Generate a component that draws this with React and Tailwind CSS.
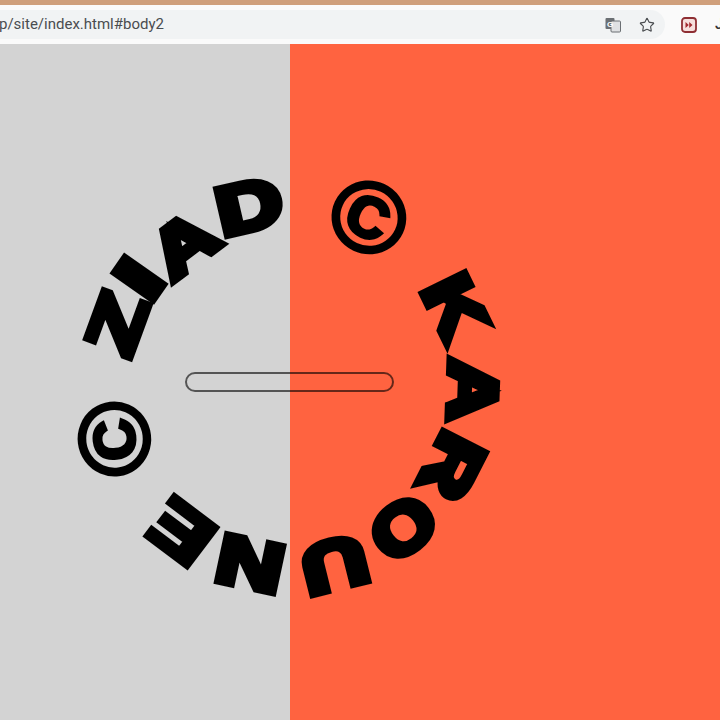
import { Star } from 'lucide-react'

const letters = [
  { ch: 'Z', x: 116, y: 323, rot: -70, sx: 1.4 },
  { ch: 'I', x: 138, y: 278, rot: -55, sx: 1.5 },
  { ch: 'A', x: 183, y: 243, rot: -37, sx: 1.3 },
  { ch: 'D', x: 249, y: 205, rot: -13, sx: 1.32 },
  { ch: '©', x: 369, y: 217, rot: 25, sx: 1.02, glyph: true },
  { ch: 'K', x: 456, y: 306, rot: 64, sx: 1.24 },
  { ch: 'A', x: 474, y: 390, rot: 92, sx: 1.26 },
  { ch: 'R', x: 453, y: 467, rot: 117, sx: 1.3 },
  { ch: 'O', x: 404, y: 529, rot: 142, sx: 1.18 },
  { ch: 'U', x: 335, y: 566, rot: 166, sx: 1.32 },
  { ch: 'N', x: 250, y: 565, rot: 192, sx: 1.34 },
  { ch: 'E', x: 181, y: 533, rot: 217, sx: 1.28 },
  { ch: '©', x: 114, y: 439, rot: -97, sx: 1.02, glyph: true },
]

function CircleText() {
  return (
    <svg width="720" height="720" viewBox="0 0 720 720" className="absolute left-0 top-0">
      {letters.map((l, i) => (
        <text
          key={i}
          transform={`translate(${l.x} ${l.y}) rotate(${l.rot}) scale(${l.sx} 1)`}
          y={l.glyph ? 35 : 25}
          textAnchor="middle"
          fontSize={l.glyph ? 100 : 69}
          className="fill-black stroke-black font-['Liberation_Sans',sans-serif] font-bold"
          strokeWidth={l.glyph ? 3 : 7}
          strokeLinejoin="miter"
        >
          {l.ch}
        </text>
      ))}
    </svg>
  )
}

function Toolbar() {
  return (
    <div className="h-[44px] bg-[#fafafa] flex flex-col overflow-hidden">
      <div className="h-[5px] bg-[#cf9f7b] shrink-0"></div>
      <div className="flex-1 flex items-center">
        <div className="h-[29px] w-[665px] shrink-0 bg-[#f1f3f4] rounded-r-full flex items-center overflow-hidden">
          <span className="-ml-[1px] flex-1 text-[15px] text-[#4a4d50] font-['Roboto',sans-serif]">p/site/index.html#body2</span>
          <svg width="16" height="16" viewBox="0 0 16 16" className="mr-[18px]">
            <rect x="0.5" y="1" width="9" height="11" rx="1" fill="#6b6f73" />
            <rect x="6" y="4" width="9.5" height="11" rx="1" fill="#dfe1e3" stroke="#6b6f73" />
            <text x="2" y="10" fontSize="8" fill="#fff" className="font-['Liberation_Sans',sans-serif] font-bold">G</text>
          </svg>
          <Star size={16} strokeWidth={1.7} className="text-[#4a4d50] mr-[10px]" />
        </div>
        <svg width="16" height="16" viewBox="0 0 16 16" className="ml-[16px] shrink-0">
          <rect x="1" y="1" width="14" height="14" rx="3" fill="#f6dfdd" stroke="#8f2f34" strokeWidth="1.8" />
          <path d="M4.5 5v6l3.3-3zM8.2 5v6l3.3-3z" fill="#a32a30" />
        </svg>
        <span className="ml-[18px] text-[15px] font-medium text-[#333] font-['Roboto',sans-serif]">J</span>
      </div>
    </div>
  )
}

export default function App() {
  return (
    <div className="relative w-[720px] h-[720px] overflow-hidden flex flex-col">
      <Toolbar />
      <div className="flex-1 flex">
        <div className="w-[290px] bg-[#d3d3d3]"></div>
        <div className="flex-1 bg-[#ff6340]"></div>
      </div>
      <CircleText />
      {/* pill straddling both panels */}
      <div className="absolute left-[185px] top-[372px] w-[209px] h-[20px] rounded-full border-[2px] border-black/60"></div>
    </div>
  )
}
